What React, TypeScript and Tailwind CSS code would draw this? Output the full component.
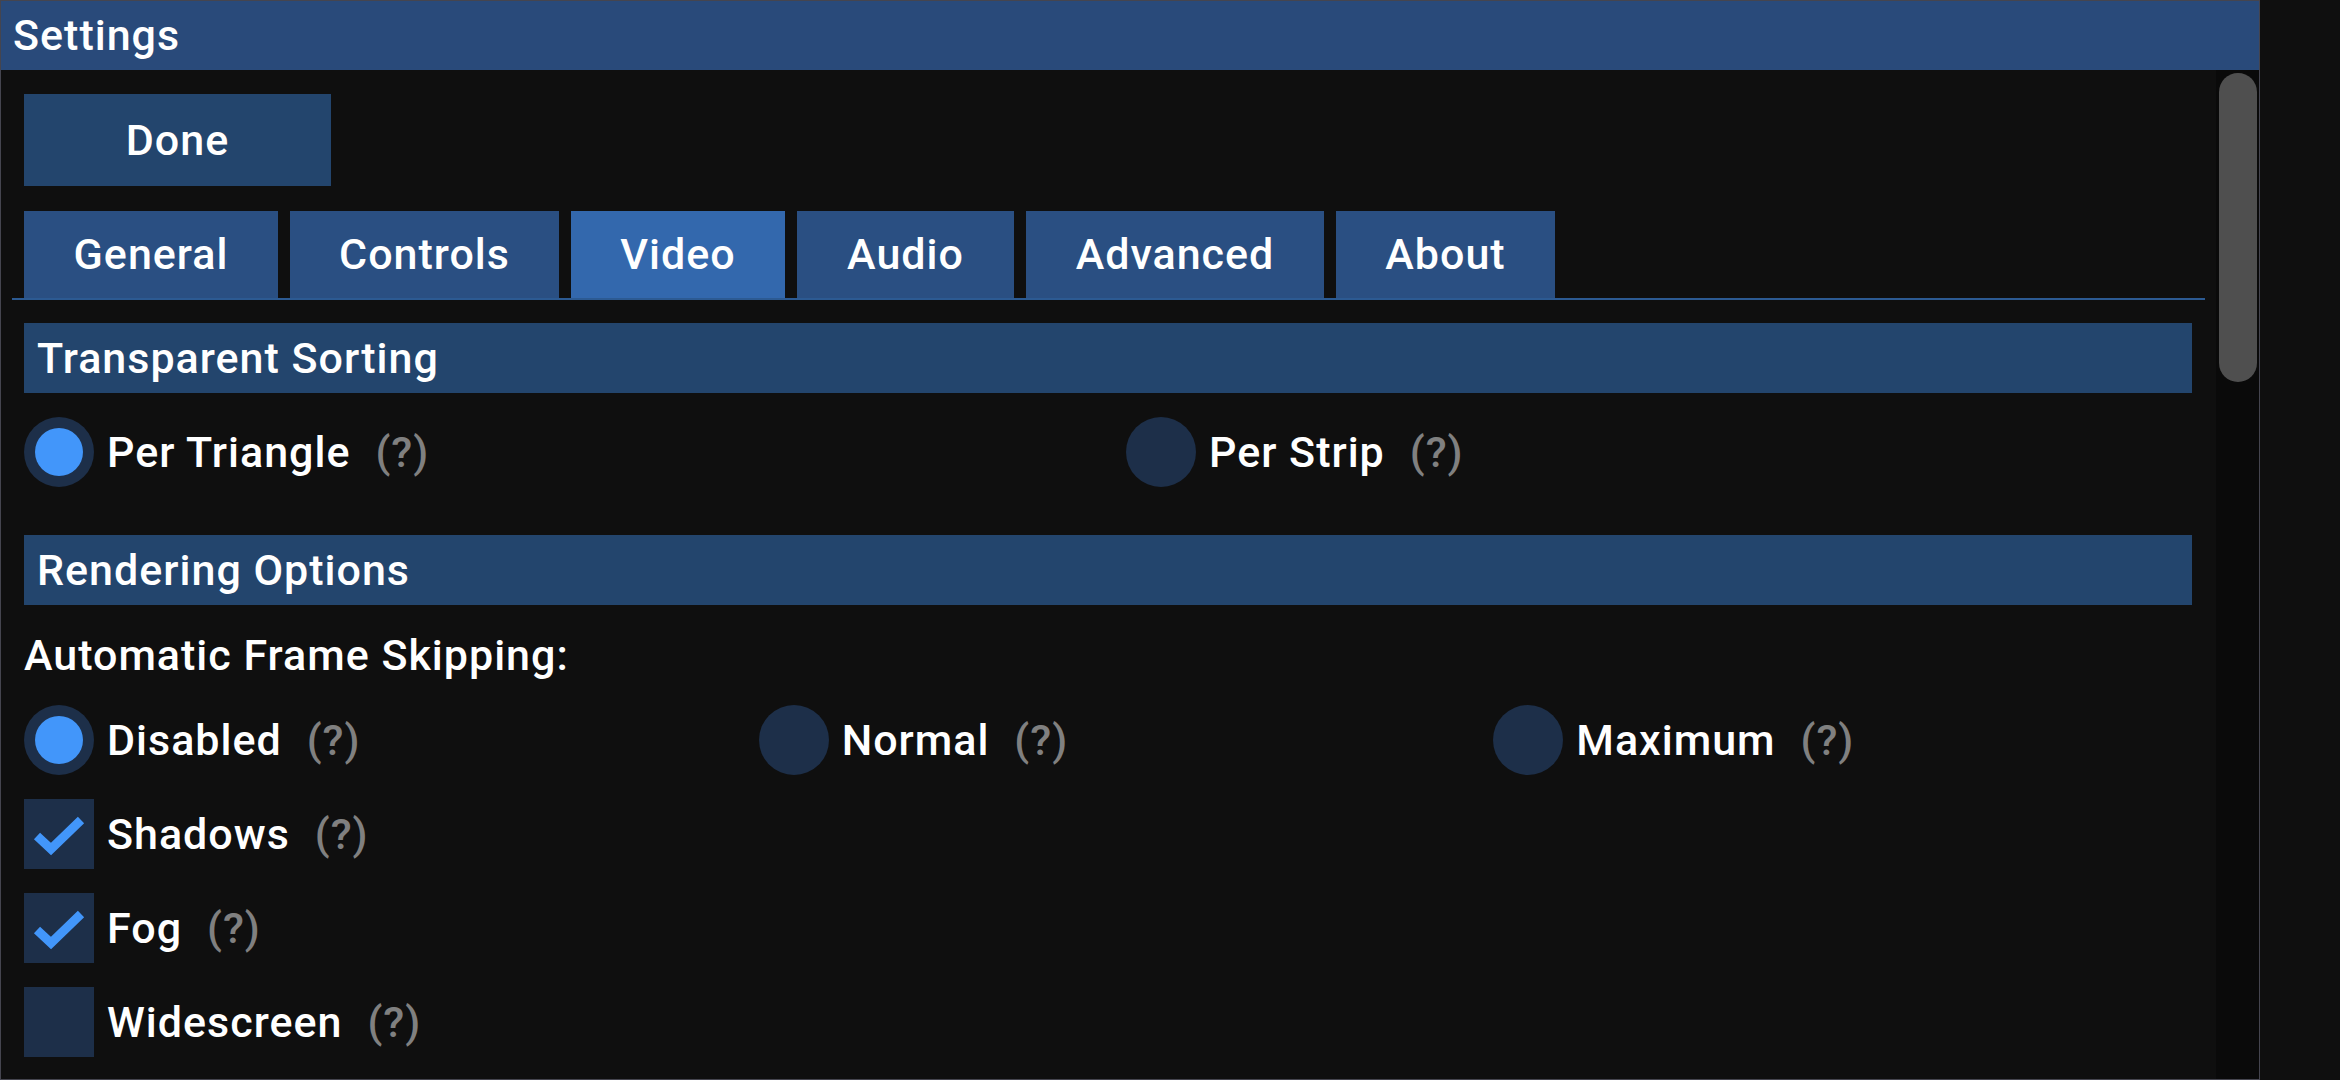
import React from "react";

const tabs = [
  { name: "General", w: "w-[254px]", active: false },
  { name: "Controls", w: "w-[269px]", active: false },
  { name: "Video", w: "w-[214px]", active: true },
  { name: "Audio", w: "w-[217px]", active: false },
  { name: "Advanced", w: "w-[298px]", active: false },
  { name: "About", w: "w-[219px]", active: false },
];

function Help() {
  return <span className="ml-[25px] text-[#808080]">(?)</span>;
}

function Radio({ label, checked }: { label: string; checked?: boolean }) {
  return (
    <div className="flex items-center h-[70px] pl-[12px]">
      <div className="w-[70px] h-[70px] rounded-full bg-[#1d2f49] flex items-center justify-center shrink-0">
        {checked && <div className="w-[48px] h-[48px] rounded-full bg-[#4296fa]" />}
      </div>
      <span className="ml-[13px] text-white">{label}</span>
      <Help />
    </div>
  );
}

function Check({ label, checked }: { label: string; checked?: boolean }) {
  return (
    <div className="flex items-center h-[70px] ml-[12px]">
      <div className="w-[70px] h-[70px] bg-[#1d2f49] shrink-0">
        {checked && (
          <svg width="70" height="70" viewBox="0 0 70 70">
            <polyline
              points="13,37 27,50 57,21"
              fill="none"
              stroke="#4296fa"
              strokeWidth="9"
              strokeLinejoin="miter"
              strokeLinecap="butt"
            />
          </svg>
        )}
      </div>
      <span className="ml-[13px] text-white">{label}</span>
      <Help />
    </div>
  );
}

function Header({ title }: { title: string }) {
  return (
    <div className="ml-[12px] mr-[24px] h-[70px] bg-[#23456d] flex items-center pl-[13px] text-white">
      {title}
    </div>
  );
}

export default function App() {
  return (
    <div className="w-[2340px] h-[1080px] bg-[#0f0f0f] flex font-['Roboto',sans-serif] font-medium text-[43px] tracking-[1px] overflow-hidden">
      <div className="w-[2260px] h-[1080px] border border-[#45454f] flex flex-col shrink-0">
        <div className="h-[69px] bg-[#294a7a] flex items-center pl-[12px] text-white shrink-0">
          Settings
        </div>
        <div className="flex-1 flex min-h-0">
          <div className="flex-1 pl-[11px] flex flex-col">
            <div className="pt-[24px] ml-[12px]">
              <button className="w-[307px] h-[92px] bg-[#23456d] text-white flex items-center justify-center">
                Done
              </button>
            </div>
            <div className="mt-[25px] ml-[12px] flex gap-[12px]">
              {tabs.map((t) => (
                <div
                  key={t.name}
                  className={`${t.w} h-[87px] flex items-center justify-center text-white ${
                    t.active ? "bg-[#3368ad]" : "bg-[#2a4f82]"
                  }`}
                >
                  {t.name}
                </div>
              ))}
            </div>
            <div className="h-[2px] bg-[#2c5a92] mr-[11px]" />
            <div className="mt-[23px]">
              <Header title="Transparent Sorting" />
            </div>
            <div className="mt-[24px] grid grid-cols-2">
              <Radio label="Per Triangle" checked />
              <Radio label="Per Strip" />
            </div>
            <div className="mt-[48px]">
              <Header title="Rendering Options" />
            </div>
            <div className="mt-[24px] ml-[12px] h-[52px] leading-[52px] text-white">
              Automatic Frame Skipping:
            </div>
            <div className="mt-[24px] grid grid-cols-3">
              <Radio label="Disabled" checked />
              <Radio label="Normal" />
              <Radio label="Maximum" />
            </div>
            <div className="mt-[24px] flex flex-col gap-[24px]">
              <Check label="Shadows" checked />
              <Check label="Fog" checked />
              <Check label="Widescreen" />
            </div>
          </div>
          <div className="w-[43px] bg-[#0a0a0a] pt-[3px] pl-[3px] shrink-0">
            <div className="w-[38px] h-[309px] rounded-full bg-[#4f4f4f]" />
          </div>
        </div>
      </div>
    </div>
  );
}
